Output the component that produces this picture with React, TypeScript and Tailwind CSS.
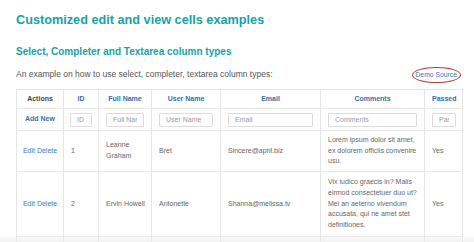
import React from 'react';

interface Row {
  id: number;
  fullName: string;
  userName: string;
  email: string;
  comments: string;
  passed: string;
  height: string;
}

const rows: Row[] = [
  {
    id: 1,
    fullName: 'Leanne Graham',
    userName: 'Bret',
    email: 'Sincere@april.biz',
    comments: 'Lorem ipsum dolor sit amet, ex dolorem officiis convenire usu.',
    passed: 'Yes',
    height: 'h-[41px]',
  },
  {
    id: 2,
    fullName: 'Ervin Howell',
    userName: 'Antonette',
    email: 'Shanna@melissa.tv',
    comments: 'Vix iudico graecis in? Malis eirmod consectetuer duo ut? Mei an aeterno vivendum accusata, qui ne amet stet definitiones.',
    passed: 'Yes',
    height: 'h-[65px]',
  },
];

const th = 'border border-[#e6e6e6] px-[7px] text-center font-bold align-middle';
const td = 'border border-[#e6e6e6] pl-[7px] pr-[5px] align-middle text-[#666]';
const filterInput =
  'block w-full h-[14px] border border-[#dcdcdc] rounded-[1px] bg-white px-[6px] text-[7px] text-[#555] placeholder:text-[#9a9a9a] outline-none';

export default function App() {
  return (
    <div className="min-h-[242px] bg-white px-4 pt-[12px] font-['Liberation_Sans',Arial,sans-serif] overflow-hidden">
      <h1 className="text-[12.7px] leading-[16px] font-bold text-[#17a2a8]">
        Customized edit and view cells examples
      </h1>
      <h2 className="mt-[18px] text-[10px] leading-[12px] font-bold text-[#17a2a8]">
        Select, Completer and Textarea column types
      </h2>
      <div className="mt-[10px] flex items-baseline justify-between pr-[1px]">
        <p className="text-[8.5px] leading-[12px] text-[#555]">
          An example on how to use select, completer, textarea column types:
        </p>
        <a className="relative text-[6.8px] leading-[12px] text-[#337ab7]">
          Demo Source
          <span className="absolute left-[-3px] right-[-4px] top-[-2px] h-[16px] rounded-[50%] border border-[#c0392b]" />
        </a>
      </div>

      <table className="mt-[8px] w-[446px] table-fixed border-collapse text-[7px] leading-[10.7px]">
        <colgroup>
          <col className="w-[47px]" />
          <col className="w-[35px]" />
          <col className="w-[53px]" />
          <col className="w-[69px]" />
          <col className="w-[100px]" />
          <col className="w-[104px]" />
          <col className="w-[38px]" />
        </colgroup>
        <thead>
          <tr className="h-[19px]">
            <th className={`${th} text-[#444]`}>Actions</th>
            <th className={`${th} text-[#2f6fb3]`}>ID</th>
            <th className={`${th} text-[#2f6fb3]`}>Full Name</th>
            <th className={`${th} text-[#2f6fb3]`}>User Name</th>
            <th className={`${th} text-[#2f6fb3]`}>Email</th>
            <th className={`${th} text-[#2f6fb3]`}>Comments</th>
            <th className={`${th} text-[#2f6fb3]`}>Passed</th>
          </tr>
          <tr className="h-[22px]">
            <td className="border border-[#e6e6e6] text-center font-bold text-[#2f6fb3] align-middle">Add New</td>
            <td className="border border-[#e6e6e6] px-[6px]"><input className={filterInput} placeholder="ID" /></td>
            <td className="border border-[#e6e6e6] px-[7px]"><input className={filterInput} placeholder="Full Name" /></td>
            <td className="border border-[#e6e6e6] px-[7px]"><input className={filterInput} placeholder="User Name" /></td>
            <td className="border border-[#e6e6e6] px-[7px]"><input className={filterInput} placeholder="Email" /></td>
            <td className="border border-[#e6e6e6] px-[7px]"><input className={filterInput} placeholder="Comments" /></td>
            <td className="border border-[#e6e6e6] pl-[7px] pr-[6px]"><input className={filterInput} placeholder="Passed" /></td>
          </tr>
        </thead>
        <tbody>
          {rows.map(row => (
            <tr key={row.id} className={row.height}>
              <td className="border border-[#e6e6e6] text-center align-middle text-[#3b7fc4]">Edit Delete</td>
              <td className={td}>{row.id}</td>
              <td className={td}>{row.fullName}</td>
              <td className={td}>{row.userName}</td>
              <td className={td}>{row.email}</td>
              <td className={td}>{row.comments}</td>
              <td className={td}>{row.passed}</td>
            </tr>
          ))}
          <tr className="h-[40px]">
            <td className="border border-[#e6e6e6]" />
            <td className="border border-[#e6e6e6]" />
            <td className="border border-[#e6e6e6]" />
            <td className="border border-[#e6e6e6]" />
            <td className="border border-[#e6e6e6]" />
            <td className="border border-[#e6e6e6]" />
            <td className="border border-[#e6e6e6]" />
          </tr>
        </tbody>
      </table>

      <div className="pointer-events-none fixed inset-x-0 bottom-0 h-[8px] bg-gradient-to-b from-transparent to-[#ececec]/70" />
    </div>
  );
}
